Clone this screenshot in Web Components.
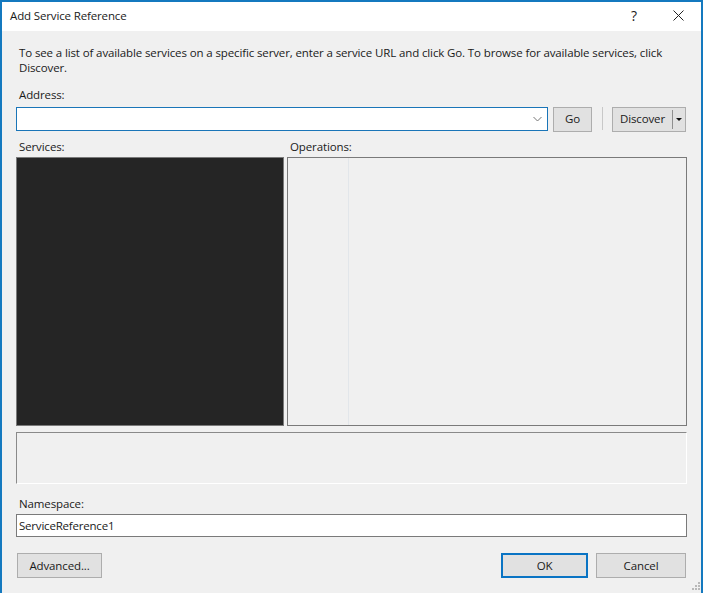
<!DOCTYPE html>
<html>
<head>
<meta charset="utf-8">
<title>Add Service Reference</title>
<style>
  html, body { margin: 0; padding: 0; background: #f0f0f0; }
  body { font: 11.5px "Open Sans", "Noto Sans", sans-serif; letter-spacing: -0.12px; color: #1a1a1a; }
</style>
</head>
<body>
<add-service-dialog></add-service-dialog>
<script>
const winTitlebar = document.createElement('template');
winTitlebar.innerHTML = `
  <style>
    :host { display: flex; align-items: center; height: 29px; padding: 0 17px 0 8px; background: #fff; }
    .title { flex: 1; position: relative; top: -1px; letter-spacing: -0.14px; }
    .help { width: 12px; text-align: center; font-size: 14px; margin-right: 33px; position: relative; top: -1px; }
    svg { display: block; position: relative; top: -1px; }
  </style>
  <span class="title"><slot></slot></span>
  <span class="help">?</span>
  <svg width="11" height="11" viewBox="0 0 11 11"><path d="M.5.5l10 10M10.5.5l-10 10" stroke="#222" fill="none"/></svg>
`;
class WinTitlebar extends HTMLElement {
  constructor() {
    super();
    this.attachShadow({ mode: 'open' });
    this.shadowRoot.appendChild(winTitlebar.content.cloneNode(true));
  }
}
customElements.define('win-titlebar', WinTitlebar);

const winButton = document.createElement('template');
winButton.innerHTML = `
  <style>
    :host { display: flex; align-items: center; justify-content: center; box-sizing: border-box; height: 25px; background: #e1e1e1; border: 1px solid #adadad; color: #1a1a1a; }
    :host([primary]) { border: 2px solid #0a74c4; }
  </style>
  <slot></slot>
`;
class WinButton extends HTMLElement {
  constructor() {
    super();
    this.attachShadow({ mode: 'open' });
    this.shadowRoot.appendChild(winButton.content.cloneNode(true));
  }
}
customElements.define('win-button', WinButton);

const winSplitButton = document.createElement('template');
winSplitButton.innerHTML = `
  <style>
    :host { display: flex; box-sizing: border-box; height: 25px; background: #e1e1e1; border: 1px solid #adadad; }
    .label { flex: 1; display: flex; align-items: center; justify-content: center; padding-bottom: 2px; }
    .arrow { width: 13px; display: flex; align-items: center; justify-content: center; position: relative; }
    .arrow::before { content: ''; position: absolute; left: 0; top: 2px; bottom: 2px; width: 1px; background: #8f8f8f; }
    .arrow i { width: 0; height: 0; border: 3px solid transparent; border-top: 3px solid #111; border-bottom: 0; }
  </style>
  <span class="label"><slot></slot></span>
  <span class="arrow"><i></i></span>
`;
class WinSplitButton extends HTMLElement {
  constructor() {
    super();
    this.attachShadow({ mode: 'open' });
    this.shadowRoot.appendChild(winSplitButton.content.cloneNode(true));
  }
}
customElements.define('win-split-button', WinSplitButton);

const winCombo = document.createElement('template');
winCombo.innerHTML = `
  <style>
    :host { display: flex; align-items: center; justify-content: flex-end; box-sizing: border-box; height: 24px; padding-right: 5px; background: #fff; border: 1px solid #1a75b8; }
    svg { display: block; }
  </style>
  <svg width="9" height="6" viewBox="0 0 9 6"><path d="M.5 1l4 4 4-4" stroke="#777" fill="none"/></svg>
`;
class WinCombo extends HTMLElement {
  constructor() {
    super();
    this.attachShadow({ mode: 'open' });
    this.shadowRoot.appendChild(winCombo.content.cloneNode(true));
  }
}
customElements.define('win-combo', WinCombo);

const winTextbox = document.createElement('template');
winTextbox.innerHTML = `
  <style>
    :host { display: flex; align-items: center; box-sizing: border-box; height: 23px; padding-left: 2px; background: #fff; border: 1px solid #7a7a7a; letter-spacing: -0.2px; }
  </style>
  <slot></slot>
`;
class WinTextbox extends HTMLElement {
  constructor() {
    super();
    this.attachShadow({ mode: 'open' });
    this.shadowRoot.appendChild(winTextbox.content.cloneNode(true));
  }
}
customElements.define('win-textbox', WinTextbox);

const addServiceDialog = document.createElement('template');
addServiceDialog.innerHTML = `
  <style>
    :host { display: block; box-sizing: border-box; width: 703px; height: 593px; position: relative; overflow: hidden; background: #f0f0f0; border: solid #1479bf; border-width: 2px 2px 0 2px; line-height: 15px; }
    .content { padding: 0 14px 0 14px; }
    .intro { margin: 14px 0 0 3px; width: 660px; }
    .label { display: block; margin-left: 3px; }
    .address-label { margin-top: 12px; }
    .address-row { display: flex; align-items: flex-start; margin-top: 5px; }
    win-combo { width: 532px; }
    .go { width: 39px; margin-left: 5px; padding-bottom: 2px; }
    .sep { width: 1px; height: 23px; margin: 0 9px 0 10px; background: #c8c8c8; }
    .discover { width: 74px; }
    .panes { display: flex; gap: 3px; margin-top: 7px; }
    .pane-col { display: flex; flex-direction: column; gap: 3px; }
    .services { width: 268px; }
    .operations { width: 400px; }
    .list { box-sizing: border-box; height: 269px; border: 1px solid #7a7a7a; }
    .services .list { background: #252525; }
    .operations .list { background: #f0f0f0; padding-left: 60px; }
    .operations .list div { height: 100%; border-left: 1px solid #e2e6ea; }
    .detail { box-sizing: border-box; height: 52px; margin-top: 6px; border: 1px solid; border-color: #8a8a8a #fff #fff #8a8a8a; }
    .ns-label { margin-top: 12px; }
    win-textbox { margin-top: 3px; }
    .footer { display: flex; margin-top: 16px; padding: 0 1px; }
    .advanced { width: 85px; }
    .ok { width: 87px; margin-left: auto; }
    .cancel { width: 90px; margin-left: 8px; }
    .grip { position: absolute; right: 1px; bottom: 3px; }
  </style>
  <win-titlebar>Add Service Reference</win-titlebar>
  <div class="content">
    <div class="intro">To see a list of available services on a specific server, enter a service URL and click Go. To browse for available services, click Discover.</div>
    <span class="label address-label">Address:</span>
    <div class="address-row">
      <win-combo></win-combo>
      <win-button class="go">Go</win-button>
      <div class="sep"></div>
      <win-split-button class="discover">Discover</win-split-button>
    </div>
    <div class="panes">
      <div class="pane-col services">
        <span class="label">Services:</span>
        <div class="list"></div>
      </div>
      <div class="pane-col operations">
        <span class="label">Operations:</span>
        <div class="list"><div></div></div>
      </div>
    </div>
    <div class="detail"></div>
    <span class="label ns-label">Namespace:</span>
    <win-textbox>ServiceReference1</win-textbox>
    <div class="footer">
      <win-button class="advanced">Advanced...</win-button>
      <win-button class="ok" primary>OK</win-button>
      <win-button class="cancel">Cancel</win-button>
    </div>
  </div>
  <svg class="grip" width="8" height="8" viewBox="0 0 8 8" fill="#b8b8b8">
    <rect x="6" y="0" width="2" height="2"/><rect x="3" y="3" width="2" height="2"/><rect x="6" y="3" width="2" height="2"/>
    <rect x="0" y="6" width="2" height="2"/><rect x="3" y="6" width="2" height="2"/><rect x="6" y="6" width="2" height="2"/>
  </svg>
`;
class AddServiceDialog extends HTMLElement {
  constructor() {
    super();
    this.attachShadow({ mode: 'open' });
    this.shadowRoot.appendChild(addServiceDialog.content.cloneNode(true));
  }
}
customElements.define('add-service-dialog', AddServiceDialog);
</script>
</body>
</html>
